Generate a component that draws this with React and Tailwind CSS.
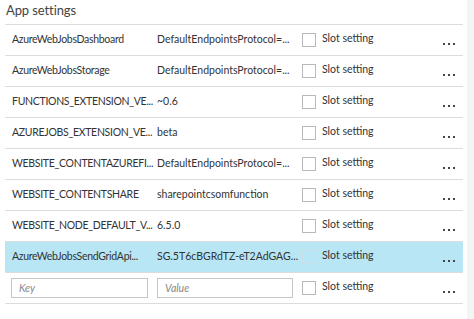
const settings = [
  { key: 'AzureWebJobsDashboard', value: 'DefaultEndpointsProtocol=...' },
  { key: 'AzureWebJobsStorage', value: 'DefaultEndpointsProtocol=...' },
  { key: 'FUNCTIONS_EXTENSION_VE...', value: '~0.6' },
  { key: 'AZUREJOBS_EXTENSION_VE...', value: 'beta' },
  { key: 'WEBSITE_CONTENTAZUREFI...', value: 'DefaultEndpointsProtocol=...' },
  { key: 'WEBSITE_CONTENTSHARE', value: 'sharepointcsomfunction' },
  { key: 'WEBSITE_NODE_DEFAULT_V...', value: '6.5.0' },
  { key: 'AzureWebJobsSendGridApi...', value: 'SG.5T6cBGRdTZ-eT2AdGAG...', selected: true },
];

const Dots = () => (
  <div className="ml-auto mr-[8px] mt-[8px] flex gap-[3px]">
    <span className="w-[2px] h-[2px] bg-[#444]" />
    <span className="w-[2px] h-[2px] bg-[#444]" />
    <span className="w-[2px] h-[2px] bg-[#444]" />
  </div>
);

const Slot = ({ selected }) => (
  <div className="flex items-center">
    <span
      className={`shrink-0 w-[14px] h-[14px] border ${selected ? 'border-[#c9dde4]' : 'border-[#b9b9b9] bg-white'}`}
    />
    <span className="ml-[6px] -mt-[3px]">Slot setting</span>
  </div>
);

export default function App() {
  return (
    <div
      className="flex w-[474px] h-[319px] bg-white text-[#333] text-[10.5px] overflow-hidden"
      style={{ fontFamily: 'Lato, "Open Sans", sans-serif' }}
    >
      <div className="w-[458px] ml-[5px]">
        <div className="h-[24px] pl-[1px] pt-[1px] text-[13px] tracking-[-0.1px] leading-[18px] text-[#444]">App settings</div>
        <div className="border-b border-[#dcdcdc]">
          {settings.map((s) => (
            <div
              key={s.key}
              className={`flex items-center h-[31px] border-t border-[#dcdcdc] ${s.selected ? 'bg-[#b8e6f5]' : ''}`}
            >
              <div className="shrink-0 w-[152px] pl-[7px] whitespace-nowrap tracking-[-0.3px]">{s.key}</div>
              <div className="shrink-0 w-[145px] whitespace-nowrap">{s.value}</div>
              <Slot selected={s.selected} />
              <Dots />
            </div>
          ))}
          <div className="flex items-center h-[31px] border-t border-[#dcdcdc]">
            <div className="shrink-0 w-[152px] pl-[6px]">
              <div className="w-[137px] h-[20px] border border-[#c6c6c6] pl-[7px] leading-[18px] italic text-[#888]">Key</div>
            </div>
            <div className="shrink-0 w-[145px]">
              <div className="w-[136px] h-[20px] border border-[#c6c6c6] pl-[7px] leading-[18px] italic text-[#888]">Value</div>
            </div>
            <Slot />
            <Dots />
          </div>
        </div>
      </div>
      <div className="ml-auto w-[7px] h-full bg-[#f4f4f4]" />
    </div>
  );
}
